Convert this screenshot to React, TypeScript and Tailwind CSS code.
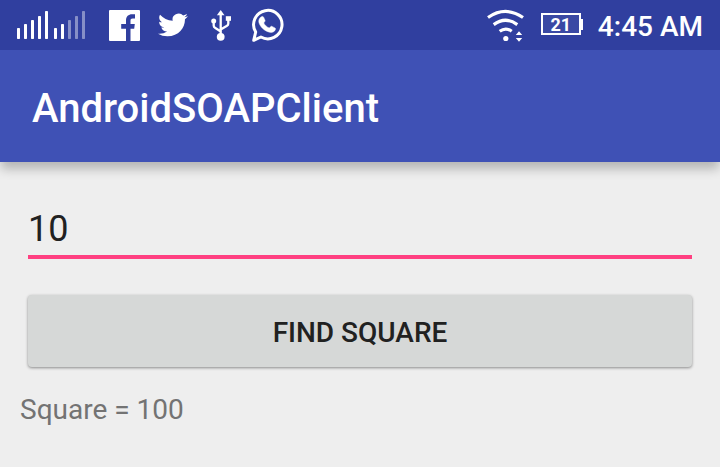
const bars = [
  { x: 0, h: 11 }, { x: 7, h: 15 }, { x: 14, h: 19 }, { x: 21, h: 23 }, { x: 28, h: 28 },
  { x: 37, h: 11 }, { x: 44, h: 15 }, { x: 51, h: 19, dim: true }, { x: 58, h: 23, dim: true }, { x: 65, h: 28, dim: true },
];

function Signal() {
  return (
    <svg className="ml-[17px] mt-[11px] h-7 w-[68px] shrink-0" viewBox="0 0 68 28">
      {bars.map((b) => (
        <rect key={b.x} x={b.x} y={28 - b.h} width="3" height={b.h} rx="0.7" fill="#fff" opacity={b.dim ? 0.42 : 1} />
      ))}
    </svg>
  );
}

function Facebook() {
  return (
    <svg className="ml-6 mt-[10px] h-[31px] w-[31px] shrink-0" viewBox="0 0 31 31">
      <rect width="31" height="31" rx="1" fill="#fff" />
      <path d="M17 31V18.800h-4.800V14H17v-3.500C17 6.300 19.500 4.200 23 4.200h3v4.300h-2.300c-1.700 0-2.200.8-2.200 2.300V14h4.300l-.6 4.800h-3.700V31z" fill="#303f9f" />
    </svg>
  );
}

function Twitter() {
  return (
    <svg className="ml-[18px] mt-[13px] h-6 w-[30px] shrink-0" viewBox="0 1.7 24 20.600" preserveAspectRatio="none">
      <path fill="#fff" d="M23.953 4.570a10 10 0 01-2.825.775 4.958 4.958 0 002.163-2.723c-.951.555-2.005.959-3.127 1.184a4.920 4.920 0 00-8.384 4.482C7.690 8.095 4.067 6.130 1.640 3.162a4.822 4.822 0 00-.666 2.475c0 1.710.870 3.213 2.188 4.096a4.904 4.904 0 01-2.228-.616v.060a4.923 4.923 0 003.946 4.827 4.996 4.996 0 01-2.212.085 4.936 4.936 0 004.604 3.417 9.867 9.867 0 01-6.102 2.105c-.390 0-.779-.023-1.170-.067a13.995 13.995 0 007.557 2.209c9.053 0 13.998-7.496 13.998-13.985 0-.210 0-.420-.015-.630A9.935 9.935 0 0024 4.590z" />
    </svg>
  );
}

function Usb() {
  return (
    <svg className="ml-[23px] mt-[10px] h-[31px] w-[20px] shrink-0" viewBox="0 0 20 31">
      <g fill="none" stroke="#fff" strokeWidth="2.300">
        <path d="M9.700 4v22M2.700 12v3.500q0 1.500 1.300 2.200l5.700 3.800M17.300 9v4.500q0 1.500-1.300 2.200l-6.300 3.800" />
      </g>
      <g fill="#fff">
        <path d="M9.700 0l3.800 5.200H5.900z" />
        <circle cx="2.700" cy="11" r="2.500" />
        <path d="M14.800 6.200h5.200v4.600h-5.200z" />
        <circle cx="9.700" cy="26.800" r="3.900" />
      </g>
    </svg>
  );
}

function WhatsApp() {
  return (
    <svg className="ml-[21px] mt-2 h-[34px] w-8 shrink-0" viewBox="0 0 32 34">
      <path d="M1.700 32.300l2-8.300a14.200 14.200 0 1 1 5.200 5z" fill="none" stroke="#fff" strokeWidth="3" strokeLinejoin="round" />
      <path d="M9.500 8.700c.9-.5 1.700-.3 2.100.5l1.400 3.100c.3.700-.1 1.200-1.300 2.600 1.300 2.400 3.100 4.100 5.600 5.200 1.500-1.800 1.900-2.100 2.700-1.700l2.900 1.500c.7.400.7.800.4 1.800-.7 2.100-3.300 3.100-5.500 2.600-5.200-1.200-9.200-4.900-10.800-9.500-.7-2.300.3-5 2.500-6.100z" fill="#fff" stroke="#fff" strokeWidth="0.5" />
    </svg>
  );
}

function Wifi() {
  return (
    <svg className="ml-auto mr-[17px] mt-[9px] h-[33px] w-[37px] shrink-0" viewBox="0 0 37 33">
      <g fill="none" stroke="#fff" strokeWidth="3.200">
        <path d="M1 8.500Q18.500-3.700 36 8.500M6.700 15.600q11.800-8.700 23.600 0M12.700 22.300q6-4.500 12 0" />
      </g>
      <g fill="#fff">
        <circle cx="18.800" cy="29.500" r="2.600" />
        <path d="M32 22.300l3.200 3.800h-6.400zM32 32.700l3.200-3.800h-6.400z" />
      </g>
    </svg>
  );
}

export default function App() {
  return (
    <div className="flex h-[467px] w-[720px] flex-col overflow-hidden bg-[#eeeeee] font-['Roboto',sans-serif]">
      <header className="shrink-0 shadow-[0_8px_10px_-1px_rgba(0,0,0,0.24)]">
        <div className="flex h-[50px] items-start bg-[#303f9f] text-white">
          <Signal />
          <Facebook />
          <Twitter />
          <Usb />
          <WhatsApp />
          <Wifi />
          <div className="mt-[13px] flex shrink-0 items-center">
            <div className="flex h-[22px] w-10 items-center justify-center border-2 border-white bg-[#3a49a4] pt-[2px] text-[18px] font-bold leading-none">21</div>
            <div className="h-[11px] w-[2px] bg-white" />
          </div>
          <time className="ml-[15px] mr-[17px] mt-[11px] whitespace-nowrap text-[28px] font-medium leading-8">4:45 AM</time>
        </div>
        <div className="flex h-28 items-center bg-[#3f51b5] pl-8">
          <h1 className="pt-[6px] text-[40px] font-medium leading-[48px] text-white">AndroidSOAPClient</h1>
        </div>
      </header>
      <main className="flex flex-col">
        <input
          aria-label="Number"
          defaultValue="10"
          className="mx-7 mt-[42px] h-[55px] border-b-4 border-[#ff4081] bg-transparent pb-[2px] text-[36px] text-[#212121] outline-none"
        />
        <button className="mx-7 mt-9 h-[72px] rounded-[4px] bg-[#d6d8d7] pt-[3px] text-[28px] font-medium text-[#212121] shadow-[0_1px_3px_rgba(0,0,0,0.42)]">
          FIND SQUARE
        </button>
        <p className="ml-5 mt-[27px] text-[28px] leading-8 text-[#737373]">Square = 100</p>
      </main>
    </div>
  );
}
